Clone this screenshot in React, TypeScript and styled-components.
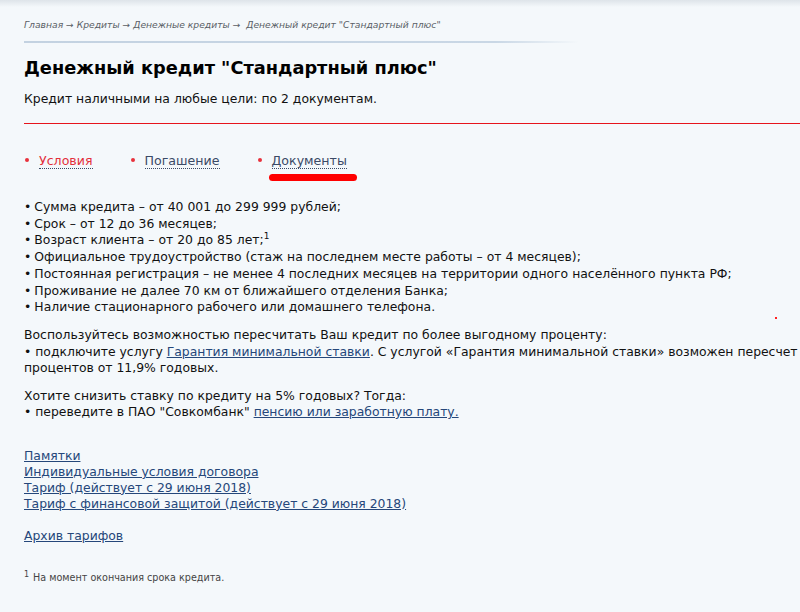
import React from "react";
import styled, { createGlobalStyle } from "styled-components";

const Global = createGlobalStyle`
  html, body { margin: 0; padding: 0; background: #f4f8fb; }
  body { font-family: "DejaVu Sans", Verdana, sans-serif; color: #111; }
`;

const Page = styled.div`
  position: relative;
  min-height: 612px;
  background: #f4f8fb;
  overflow: hidden;
  &::before {
    content: "";
    position: absolute;
    left: 0; right: 0; top: 0;
    height: 7px;
    background: linear-gradient(to bottom, rgba(180,190,200,0.35), rgba(244,248,251,0));
  }
`;

const Inner = styled.div`
  padding: 18px 0 0 24px;
`;

const Crumbs = styled.div`
  font-size: 9.2px;
  font-style: italic;
  color: #5a5f66;
  line-height: 13px;
  padding-bottom: 10px;
  width: 554px;
  border-bottom: 2px solid transparent;
  border-image: linear-gradient(to right, #c3d2e1, #c9d7e5 85%, rgba(201,215,229,0)) 1;
`;

const Title = styled.h1`
  margin: 13px 0 0;
  font-size: 17.8px;
  font-weight: bold;
  line-height: 24px;
  color: #000;
`;

const Lead = styled.p`
  margin: 11px 0 0;
  font-size: 12.4px;
  line-height: 16px;
  color: #111;
`;

const RedRule = styled.div`
  margin-top: 16px;
  height: 1px;
  background-color: rgb(230, 20, 28);
`;

const Tabs = styled.ul`
  list-style: none;
  display: flex;
  margin: 29px 0 0;
  padding: 0;
`;

const Tab = styled.li<{ $active?: boolean; $selected?: boolean }>`
  position: relative;
  display: flex;
  align-items: center;
  font-size: 12.6px;
  line-height: 16px;
  margin-right: 37px;
  &::before {
    content: "";
    width: 4px;
    height: 4px;
    border-radius: 50%;
    background: #e8323c;
    margin: 0 10px 0 1px;
    position: relative;
    top: -1px;
  }
  span {
    position: relative;
    color: ${(p) => (p.$active ? "#e3303c" : "#3b4a66")};
    border-bottom: 1px dotted #3b4a66;
    line-height: 15px;
  }
  ${(p) =>
    p.$selected &&
    `
    span::after {
      content: "";
      position: absolute;
      left: -3px;
      right: -10px;
      bottom: -13px;
      height: 7px;
      border-radius: 4px;
      background: #ff0000;
    }
  `}
`;

const List = styled.ul`
  list-style: none;
  margin: 30px 0 0;
  padding: 0;
  font-size: 12.4px;
  line-height: 16.7px;
`;

const Item = styled.li`
  &::before {
    content: "•";
    margin-right: 3px;
  }
  sup {
    font-size: 9px;
    line-height: 0;
    vertical-align: 5px;
  }
`;

const Para = styled.p<{ $gap?: number }>`
  margin: ${(p) => p.$gap ?? 11}px 0 0;
  font-size: 12.4px;
  line-height: 16.6px;
  width: 775px;
`;

const Link = styled.a`
  color: #25477a;
  text-decoration: underline;
`;

const DocLinks = styled.div<{ $gap: number }>`
  display: flex;
  flex-direction: column;
  align-items: flex-start;
  margin-top: ${(p) => p.$gap}px;
  font-size: 12.4px;
  line-height: 16px;
`;

const Note = styled.div`
  margin-top: 28px;
  font-size: 9.6px;
  color: #444;
  sup {
    font-size: 8px;
    vertical-align: 4px;
    line-height: 0;
    margin-right: 4px;
  }
`;

const Speck = styled.span`
  position: absolute;
  left: 775px;
  top: 317px;
  width: 2px;
  height: 2px;
  background: #f22;
`;

export default function App() {
  return (
    <Page>
      <Global />
      <Inner>
        <Crumbs>Главная → Кредиты → Денежные кредиты → &nbsp;Денежный кредит "Стандартный плюс"</Crumbs>
        <Title>Денежный кредит "Стандартный плюс"</Title>
        <Lead>Кредит наличными на любые цели: по 2 документам.</Lead>
        <RedRule />
        <Tabs>
          <Tab $active><span>Условия</span></Tab>
          <Tab><span>Погашение</span></Tab>
          <Tab $selected><span>Документы</span></Tab>
        </Tabs>
        <List>
          <Item>Сумма кредита – от 40 001 до 299 999 рублей;</Item>
          <Item>Срок – от 12 до 36 месяцев;</Item>
          <Item>Возраст клиента – от 20 до 85 лет;<sup>1</sup></Item>
          <Item>Официальное трудоустройство (стаж на последнем месте работы – от 4 месяцев);</Item>
          <Item>Постоянная регистрация – не менее 4 последних месяцев на территории одного населённого пункта РФ;</Item>
          <Item>Проживание не далее 70 км от ближайшего отделения Банка;</Item>
          <Item>Наличие стационарного рабочего или домашнего телефона.</Item>
        </List>
        <Para>
          Воспользуйтесь возможностью пересчитать Ваш кредит по более выгодному проценту:
          <br />• подключите услугу <Link>Гарантия минимальной ставки</Link>. С услугой «Гарантия минимальной ставки» возможен пересчет процентов от 11,9% годовых.
        </Para>
        <Para>
          Хотите снизить ставку по кредиту на 5% годовых? Тогда:
          <br />• переведите в ПАО "Совкомбанк" <Link>пенсию или заработную плату.</Link>
        </Para>
        <DocLinks $gap={27}>
          <Link>Памятки</Link>
          <Link>Индивидуальные условия договора</Link>
          <Link>Тариф (действует с 29 июня 2018)</Link>
          <Link>Тариф с финансовой защитой (действует с 29 июня 2018)</Link>
        </DocLinks>
        <DocLinks $gap={16}>
          <Link>Архив тарифов</Link>
        </DocLinks>
        <Note><sup>1</sup>На момент окончания срока кредита.</Note>
      </Inner>
      <Speck />
    </Page>
  );
}
